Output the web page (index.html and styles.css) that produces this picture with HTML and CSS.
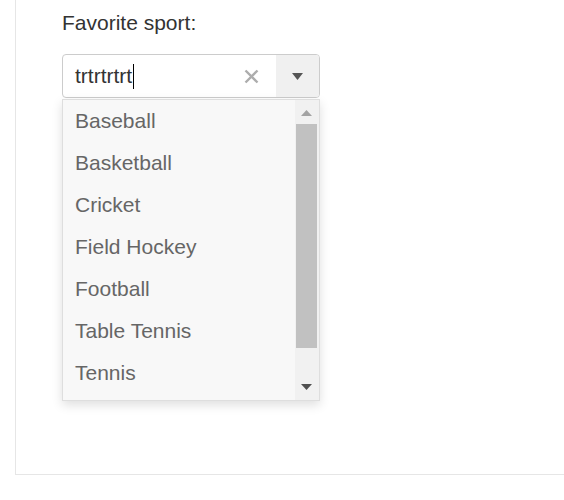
FILE: index.html
```html
<!DOCTYPE html>
<html>
<head>
<meta charset="utf-8">
<link rel="stylesheet" href="styles.css">
</head>
<body>
<div class="panel">
  <div class="label">Favorite sport:</div>
  <div class="combo">
    <div class="combo-input">
      <span class="value">trtrtrtrt</span><span class="caret"></span>
    </div>
    <div class="clear">
      <svg width="15" height="15" viewBox="0 0 15 15"><path d="M1.5 1.5 L13.5 13.5 M13.5 1.5 L1.5 13.5" stroke="#adadad" stroke-width="2.4" fill="none"/></svg>
    </div>
    <div class="toggle">
      <svg width="11" height="7" viewBox="0 0 11 7"><path d="M0 0 H11 L5.5 7 Z" fill="#555"/></svg>
    </div>
  </div>
  <div class="list">
    <ul class="items">
      <li>Baseball</li>
      <li>Basketball</li>
      <li>Cricket</li>
      <li>Field Hockey</li>
      <li>Football</li>
      <li>Table Tennis</li>
      <li>Tennis</li>
    </ul>
    <div class="scrollbar">
      <div class="sb-btn sb-up">
        <svg width="11" height="6" viewBox="0 0 11 6"><path d="M0 6 H11 L5.5 0 Z" fill="#a3a3a3"/></svg>
      </div>
      <div class="sb-thumb"></div>
      <div class="sb-track"></div>
      <div class="sb-btn sb-down">
        <svg width="11" height="6" viewBox="0 0 11 6"><path d="M0 0 H11 L5.5 6 Z" fill="#505050"/></svg>
      </div>
    </div>
  </div>
</div>
</body>
</html>
```

FILE: styles.css
```css
html, body {
  margin: 0;
  padding: 0;
  background: #ffffff;
}

body {
  font-family: "Liberation Sans", Arial, sans-serif;
}

.panel {
  margin-left: 15px;
  border-left: 1px solid #e6e6e6;
  border-bottom: 1px solid #e6e6e6;
  padding: 11px 0 0 46px;
  height: 463px;
}

.label {
  font-size: 21px;
  line-height: 24px;
  color: #333333;
  margin-bottom: 19px;
}

.combo {
  width: 258px;
  height: 44px;
  box-sizing: border-box;
  border: 1px solid #cccccc;
  border-radius: 4px;
  display: flex;
  background: #ffffff;
  overflow: hidden;
}

.combo-input {
  flex: 1;
  display: flex;
  align-items: center;
  padding-left: 12px;
  font-size: 21px;
  color: #333333;
}

.caret {
  display: inline-block;
  width: 1px;
  height: 25px;
  background: #000000;
  margin-left: 1px;
}

.clear {
  width: 32px;
  display: flex;
  align-items: center;
  justify-content: flex-start;
}

.toggle {
  width: 43px;
  background: #f0f0f0;
  display: flex;
  align-items: center;
  justify-content: center;
}

.list {
  margin-top: 1px;
  width: 258px;
  height: 302px;
  box-sizing: border-box;
  border: 1px solid #dedede;
  background: #f8f8f8;
  box-shadow: 0 4px 10px rgba(0, 0, 0, 0.13);
  display: flex;
  overflow: hidden;
}

.items {
  list-style: none;
  margin: 0;
  padding: 0;
  flex: 1;
}

.items li {
  height: 42px;
  line-height: 42px;
  padding-left: 12px;
  font-size: 21px;
  color: #666666;
}

.scrollbar {
  width: 24px;
  background: #f1f1f1;
  display: flex;
  flex-direction: column;
}

.sb-btn {
  display: flex;
  justify-content: center;
  padding-right: 1px;
}

.sb-up {
  height: 24px;
  align-items: flex-start;
  padding-top: 10px;
  box-sizing: border-box;
}

.sb-thumb {
  height: 224px;
  background: #c1c1c1;
  margin: 0 2px 0 1px;
}

.sb-track {
  flex: 1;
}

.sb-down {
  height: 16px;
  align-items: flex-start;
  box-sizing: border-box;
}
```
